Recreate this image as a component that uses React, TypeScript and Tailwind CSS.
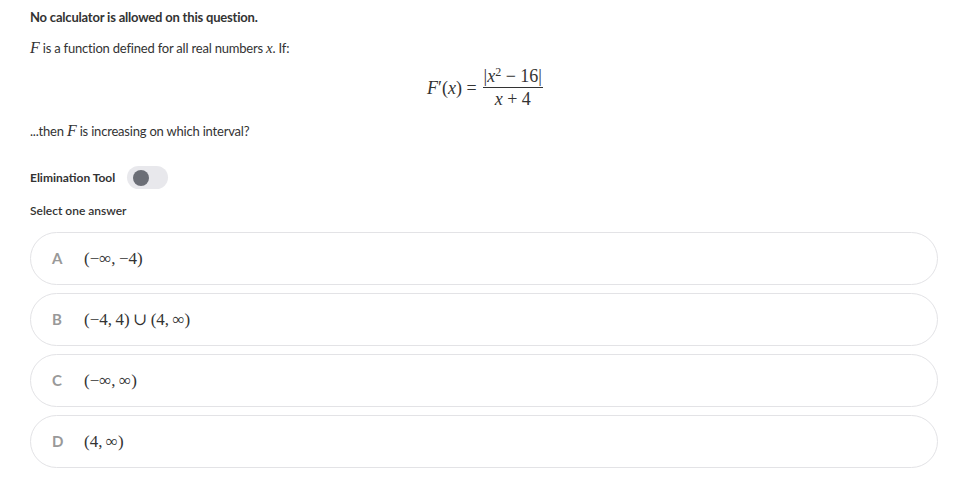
import React from "react";

const SERIF = '"Liberation Serif", "DejaVu Serif", serif';

const M = ({ children }: { children: React.ReactNode }) => (
  <span className="italic" style={{ fontFamily: SERIF }}>{children}</span>
);

const R = ({ children }: { children: React.ReactNode }) => (
  <span className="not-italic" style={{ fontFamily: SERIF }}>{children}</span>
);

const options: { l: string; c: React.ReactNode }[] = [
  { l: "A", c: <R>(−∞,{"\u2009"}−4)</R> },
  { l: "B", c: <R>(−4,{"\u2009"}4){"\u2009"}∪{"\u2009"}(4,{"\u2009"}∞)</R> },
  { l: "C", c: <R>(−∞,{"\u2009"}∞)</R> },
  { l: "D", c: <R>(4,{"\u2009"}∞)</R> },
];

export default function App() {
  return (
    <div className="w-[958px] h-[478px] bg-white text-[#333] font-['Lato',sans-serif] pl-[30px] pr-[20px] pt-[8px]">
      <p className="text-[13px] font-bold leading-[18px] tracking-[-0.2px]">No calculator is allowed on this question.</p>
      <p className="text-[13px] leading-[18px] mt-[12px] tracking-[-0.2px]">
        <span className="text-[16px]"><M>F</M></span> is a function defined for all real numbers <span className="text-[15px]"><M>x</M></span>. If:
      </p>
      <div className="flex justify-center mt-[9px] pl-[2px]">
        <div className="flex items-center gap-[4px] text-[18px]" style={{ fontFamily: SERIF }}>
          <span><M>F</M>′(<M>x</M>) =</span>
          <div className="flex flex-col items-center ml-[2px]">
            <span className="leading-[21px] px-[1px]">|<M>x</M><sup className="text-[12px]">2</sup> − 16|</span>
            <span className="h-px w-full bg-[#333]"></span>
            <span className="leading-[22px]"><M>x</M> + 4</span>
          </div>
        </div>
      </div>
      <p className="text-[13px] leading-[18px] mt-[11px] tracking-[-0.2px]">
        ...then <span className="text-[16px]"><M>F</M></span> is increasing on which interval?
      </p>
      <div className="flex items-center mt-[26px] gap-[12px]">
        <span className="text-[12px] font-bold leading-[16px]">Elimination Tool</span>
        <div className="w-[41px] h-[23px] rounded-full bg-[#e8e8ec] flex items-center pl-[6px]">
          <div className="w-[16px] h-[16px] rounded-full bg-[#6b6e76]"></div>
        </div>
      </div>
      <p className="text-[12px] font-semibold leading-[16px] mt-[14px]">Select one answer</p>
      <div className="flex flex-col gap-[8px] mt-[13px] w-[908px]">
        {options.map((o) => (
          <div key={o.l} className="h-[53px] rounded-[27px] border border-[#e3e3e6] flex items-center pl-[21px]">
            <span className="w-[32px] text-[15px] font-bold text-[#999]">{o.l}</span>
            <span className="text-[17px] text-[#333]">{o.c}</span>
          </div>
        ))}
      </div>
    </div>
  );
}
